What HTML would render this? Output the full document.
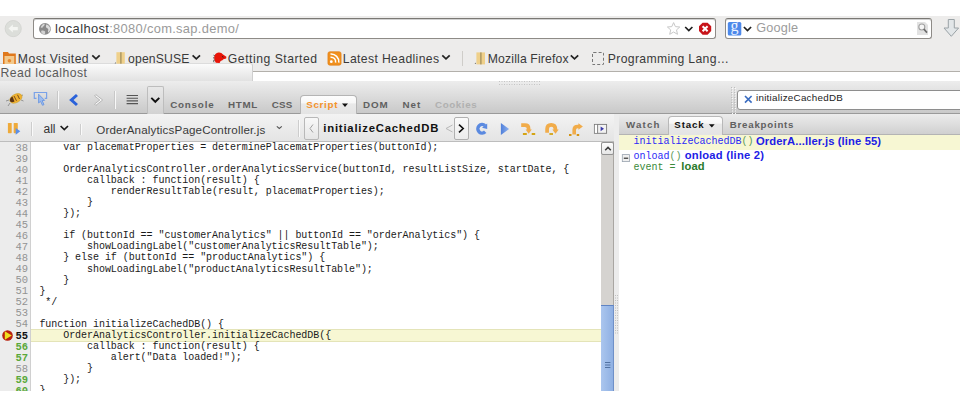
<!DOCTYPE html>
<html><head><meta charset="utf-8">
<style>
html,body{margin:0;padding:0}
body{width:966px;height:408px;position:relative;overflow:hidden;background:#fff;font-family:"Liberation Sans",sans-serif}
.a{position:absolute;box-sizing:border-box}
.t{position:absolute;white-space:pre}
svg{position:absolute;overflow:visible}
</style></head><body>
<div style="position:absolute;left:0;top:0;width:960px;height:391px;overflow:hidden">
<!-- browser chrome -->
<div class="a" style="left:0;top:16px;width:960px;height:56px;background:#edeceb;border-bottom:1px solid #b3b0ab"></div>
<!-- url bar -->
<div class="a" style="left:33px;top:18px;width:683px;height:21px;background:#fff;border:1px solid #8e8b87;border-top-color:#7a7874;border-radius:3px;box-shadow:inset 0 1px 0 rgba(0,0,0,.18)"></div>
<!-- search bar -->
<div class="a" style="left:725px;top:18px;width:207px;height:21px;background:#fff;border:1px solid #8e8b87;border-top-color:#7a7874;border-radius:3px;box-shadow:inset 0 1px 0 rgba(0,0,0,.18)"></div>
<!-- status panel -->
<div class="a" style="left:0;top:63px;width:253px;height:18px;background:linear-gradient(#fbfbfb,#e2e2e2);border-right:1px solid #cfcfcf;border-top:1px solid #dcdcdc;border-top-right-radius:3px"></div>
<!-- firebug toolbar -->
<div class="a" style="left:0;top:81px;width:960px;height:33px;background:linear-gradient(#ededed,#c9c9c9);border-bottom:1px solid #9a9a9a"></div>
<!-- script toolbar -->
<div class="a" style="left:0;top:114px;width:614px;height:28px;background:linear-gradient(#f3f3f3,#e4e4e4);border-bottom:1px solid #bdbdbd"></div>
<!-- splitter -->
<div class="a" style="left:614px;top:114px;width:5px;height:277px;background:#ececec"></div>
<!-- side tabs -->
<div class="a" style="left:619px;top:114px;width:341px;height:21px;background:linear-gradient(#ececec,#d0d0d0);border-bottom:1px solid #b4b4b4"></div>
<!-- side panel -->
<div class="a" style="left:619px;top:135px;width:341px;height:256px;background:#fff"></div>
<div class="a" style="left:619px;top:135px;width:341px;height:15px;background:#f7f7d3"></div>
<!-- code area -->
<div class="a" style="left:0;top:142px;width:614px;height:249px;background:#fff"></div>
<div class="a" style="left:0;top:142px;width:31px;height:249px;background:#ececec;border-right:1px solid #d0d0d0"></div>
<div class="a" style="left:31px;top:329px;width:570px;height:12.6px;background:#f7f7d3;border-top:1px solid #e4e4b8;border-bottom:1px solid #e4e4b8"></div>
<!-- scrollbar -->
<div class="a" style="left:601px;top:142px;width:13px;height:249px;background:#d5d3d0;border-right:1px solid #a9a6a2"></div>
<div class="a" style="left:601px;top:142px;width:13px;height:13px;background:linear-gradient(#fdfdfd,#e6e6e6);border:1px solid #939393;border-radius:2px"></div>
<div class="a" style="left:601px;top:305px;width:13px;height:86px;background:linear-gradient(90deg,#abc6ee,#8fb0e3);border-top:1px solid #5f84c4;border-right:1px solid #6f90c8"></div>
<!-- back button -->
<svg style="left:0;top:16px" width="30" height="26" viewBox="0 16 30 26">
 <circle cx="13.2" cy="28.6" r="8.1" fill="#dcdeda" stroke="#d0d2ce" stroke-width="0.8"/>
 <path d="M8.5 28.6 L12.8 24.6 L12.8 27 L17.8 27 L17.8 30.2 L12.8 30.2 L12.8 32.6 Z" fill="#f4f5f2"/>
</svg>
<!-- globe -->
<svg style="left:38px;top:22px" width="14" height="14" viewBox="38 22 14 14">
 <circle cx="44.9" cy="28.9" r="5.9" fill="#8a8a8a"/>
 <path d="M40.6 27.2 Q41.8 24.4 44.5 23.6 Q45.2 24.6 44 26 Q42.6 26.6 42.2 28 Z" fill="#d6d6d6"/>
 <path d="M46.6 24.3 Q49.6 25.6 50.5 28.6 Q50 31.5 48.2 32.8 Q47.6 31 48.4 29.4 Q47.2 27.8 46 27.6 Q45.6 25.6 46.6 24.3 Z" fill="#dcdcdc"/>
 <path d="M41.6 30.6 Q43.8 30.2 45.2 31.4 Q45.4 33.6 44.4 34.7 Q42.2 34.2 41 32 Z" fill="#d2d2d2"/>
</svg>
<!-- star -->
<svg style="left:665px;top:21px" width="17" height="16" viewBox="665 21 17 16">
 <path d="M673.6 22.6 L675.4 26.6 L679.8 27 L676.5 29.9 L677.5 34.3 L673.6 32 L669.7 34.3 L670.7 29.9 L667.4 27 L671.8 26.6 Z" fill="#fff" stroke="#c8c8c8" stroke-width="1"/>
</svg>
<!-- chevrons (url, google) -->
<svg style="left:683px;top:25px" width="12" height="8" viewBox="683 25 12 8">
 <path d="M685.2 27 L688.8 30.5 L692.4 27" fill="none" stroke="#1e1e1e" stroke-width="1.7"/>
</svg>
<svg style="left:742px;top:25px" width="12" height="8" viewBox="742 25 12 8">
 <path d="M743.9 27 L747.5 30.5 L751.1 27" fill="none" stroke="#1e1e1e" stroke-width="1.7"/>
</svg>
<!-- red stop -->
<svg style="left:698px;top:21px" width="15" height="15" viewBox="698 21 15 15">
 <path d="M702.6 22.7 L707.6 22.7 L711.2 26.3 L711.2 31.1 L707.6 34.7 L702.6 34.7 L699 31.1 L699 26.3 Z" fill="#c8141a"/>
 <path d="M702.6 26.2 L707.6 31.2 M707.6 26.2 L702.6 31.2" stroke="#fff" stroke-width="2"/>
</svg>
<!-- google g -->
<svg style="left:727px;top:21px" width="16" height="16" viewBox="727 21 16 16">
 <rect x="727.8" y="21.9" width="13.5" height="13.5" rx="1.5" fill="#4d89ea"/>
 <text x="734.4" y="30.8" font-family="Liberation Serif" font-size="16" fill="#eef4ff" text-anchor="middle">g</text>
</svg>
<!-- magnifier -->
<svg style="left:915px;top:20px" width="16" height="17" viewBox="915 20 16 17">
 <path d="M917 22 L925 22 L928 25 L928 35 L917 35 Z" fill="#e2e2e2"/>
 <circle cx="921.8" cy="27" r="3" fill="#f6f6f6" stroke="#a0a0a0" stroke-width="1.1"/>
 <path d="M923.8 29 L927 32.6" stroke="#6a6a6a" stroke-width="1.7"/>
</svg>
<!-- download arrow -->
<svg style="left:942px;top:18px" width="18" height="20" viewBox="942 18 18 20">
 <path d="M948.3 19.5 L954.3 19.5 L954.3 28 L958.6 28 L951.3 36.3 L944 28 L948.3 28 Z" fill="#e2e6e8" stroke="#9aa2a6" stroke-width="1"/>
</svg>
<!-- bookmark icons -->
<svg style="left:2px;top:51px" width="16" height="14" viewBox="2 51 16 14">
 <path d="M3 52 L8 52 L9 53.5 L15.8 53.5 L15.8 64 L3 64 Z" fill="#e0781c"/>
 <path d="M4.5 56 L14.3 56 L14.3 64 L4.5 64 Z" fill="#f3c98c"/>
 <circle cx="9.4" cy="60.8" r="1.8" fill="#e88a30"/>
</svg>
<svg style="left:112px;top:51px" width="14" height="14" viewBox="112 51 14 14">
 <path d="M114.5 63.5 L116 62 L116 63.5 Z" fill="#777"/>
 <rect x="116.4" y="52.2" width="8.4" height="11.5" fill="#efd08a"/>
 <rect x="120.3" y="52.2" width="1.2" height="11.5" fill="#9c8a5a"/>
</svg>
<svg style="left:212px;top:51px" width="16" height="13" viewBox="212 51 16 13">
 <path d="M214.2 57 Q214.6 53.4 218.6 52.6 Q221.6 52.4 223 54.6 L226.4 56.8 L226.2 58.6 L223.4 59.2 L222.4 60.2 L220.6 61 L219.6 63 L215.8 62.8 Q213.8 60.6 214.2 57 Z" fill="#e81408"/>
 <path d="M213.6 55.2 L214.6 55.6 M213.2 57.8 L214.4 58 M213.4 60.4 L214.6 60.2 M213.3 61.6 L214.3 61.9 M222 56.5 L223.5 57.2" stroke="#222" stroke-width="0.9"/>
</svg>
<svg style="left:327px;top:51px" width="15" height="15" viewBox="327 51 15 15">
 <rect x="327.9" y="51.7" width="13.2" height="13.5" rx="2" fill="#f0901e" stroke="#e07a10" stroke-width="0.6"/>
 <circle cx="331.3" cy="61.7" r="1.4" fill="#fff"/>
 <path d="M330.5 57.2 A4.6 4.6 0 0 1 335.6 62.6 M330.5 54 A7.8 7.8 0 0 1 338.8 62.6" fill="none" stroke="#fff" stroke-width="1.5"/>
</svg>
<div class="a" style="left:462px;top:51px;width:1px;height:15px;background:#cfcdc9"></div>
<svg style="left:472px;top:51px" width="14" height="14" viewBox="472 51 14 14">
 <path d="M474.5 64 L476 62.5 L476 64 Z" fill="#777"/>
 <rect x="476.4" y="52.4" width="8.6" height="12" fill="#efd08a"/>
 <rect x="480.3" y="52.4" width="1.2" height="12" fill="#9c8a5a"/>
</svg>
<div class="a" style="left:592px;top:52px;width:12px;height:12.5px;border:1px dashed #777;border-radius:1.5px"></div>
<!-- bookmark chevrons -->
<svg style="left:90px;top:54px" width="12" height="8" viewBox="90 54 12 8">
 <path d="M92.3 55.3 L96 58.9 L99.7 55.3" fill="none" stroke="#222" stroke-width="1.7"/>
</svg>
<svg style="left:190px;top:54px" width="12" height="8" viewBox="190 54 12 8">
 <path d="M192.6 55.3 L196.3 58.9 L200 55.3" fill="none" stroke="#222" stroke-width="1.7"/>
</svg>
<svg style="left:440px;top:54px" width="12" height="8" viewBox="440 54 12 8">
 <path d="M442.3 55.3 L446 58.9 L449.7 55.3" fill="none" stroke="#222" stroke-width="1.7"/>
</svg>
<svg style="left:569px;top:54px" width="12" height="8" viewBox="569 54 12 8">
 <path d="M570.8 55.3 L574.5 58.9 L578.2 55.3" fill="none" stroke="#222" stroke-width="1.7"/>
</svg>
<!-- firebug bug -->
<svg style="left:4px;top:90px" width="22" height="18" viewBox="4 90 22 18">
 <path d="M9 100 L6 101 M10 103 L8 106 M20 96 L23 95 M21 100 L23.5 101" stroke="#777" stroke-width="0.7"/>
 <ellipse cx="15.9" cy="98.4" rx="6.6" ry="4.2" transform="rotate(-28 15.9 98.4)" fill="#f0b030" stroke="#c8a028" stroke-width="0.5"/>
 <path d="M10.2 101.5 Q9 98.5 12.5 96.5 L14.5 101.5 Q12 103 10.2 101.5 Z" fill="#5a3418"/>
 <path d="M14 96 L16.5 100.8 M17.5 94.8 L19.5 99" stroke="#6a4418" stroke-width="0.9"/>
</svg>
<!-- inspect -->
<svg style="left:32px;top:90px" width="18" height="18" viewBox="32 90 18 18">
 <path d="M36.5 98.4 L34.3 98.4 L34.3 92.5 L46.6 92.5 L46.6 98.4 L44.8 98.4" fill="none" stroke="#7aa2e8" stroke-width="1.2"/>
 <path d="M38.6 94.2 L38.6 103 L40.5 101.3 L42.5 105.3 L44 104.6 L42.1 100.6 L44.6 100.4 Z" fill="#9dbdf0" stroke="#5f8fe0" stroke-width="0.8"/>
</svg>
<div class="a" style="left:57px;top:91px;width:2px;height:18px;border-left:1px solid #c8c8c8;border-right:1px solid #f8f8f8"></div>
<!-- back / fwd -->
<svg style="left:68px;top:92px" width="40" height="16" viewBox="68 92 40 16">
 <path d="M77 95 L71.4 100 L77 105" fill="none" stroke="#2a62da" stroke-width="3" stroke-linejoin="miter"/>
 <path d="M95.8 94.6 L102.6 100 L95.8 105.4 L94.6 104 L99.8 100 L94.6 96 Z" fill="#fafafa" stroke="#a8a8a8" stroke-width="0.8"/>
</svg>
<div class="a" style="left:114px;top:91px;width:2px;height:18px;border-left:1px solid #c8c8c8;border-right:1px solid #f8f8f8"></div>
<!-- menu lines -->
<svg style="left:125px;top:94px" width="15" height="12" viewBox="125 94 15 12">
 <path d="M126.6 95.5 H138 M126.6 98.2 H138 M126.6 100.9 H138 M126.6 103.6 H138" stroke="#555" stroke-width="1.1"/>
</svg>
<!-- dropdown button -->
<div class="a" style="left:147px;top:86px;width:17px;height:28px;background:linear-gradient(#e8e8e8,#d2d2d2);border:1px solid #bdbdbd;border-bottom:none;border-radius:2px 2px 0 0"></div>
<svg style="left:149px;top:96px" width="13" height="9" viewBox="149 96 13 9">
 <path d="M151.3 97.9 L155.3 101.8 L159.3 97.9" fill="none" stroke="#111" stroke-width="1.9"/>
</svg>
<!-- script tab -->
<div class="a" style="left:300px;top:95px;width:57px;height:19px;background:linear-gradient(#fdfdfd,#f7f7f7 38%,#e9e9e9 44%,#e4e4e4);border:1px solid #b4b4b4;border-bottom:none;border-radius:4px 4px 0 0"></div>
<svg style="left:341px;top:102px" width="8" height="5" viewBox="341 102 8 5">
 <path d="M342 103.5 L348 103.5 L345 106.9 Z" fill="#111"/>
</svg>
<!-- search grip -->
<svg style="left:728px;top:84px" width="10" height="32" viewBox="728 84 10 32"><rect x="731" y="87.0" width="1" height="1" fill="#bcbcbc"/><rect x="732" y="88.0" width="1" height="1" fill="#fafafa"/><rect x="731" y="89.5" width="1" height="1" fill="#bcbcbc"/><rect x="732" y="90.5" width="1" height="1" fill="#fafafa"/><rect x="731" y="92.0" width="1" height="1" fill="#bcbcbc"/><rect x="732" y="93.0" width="1" height="1" fill="#fafafa"/><rect x="731" y="94.5" width="1" height="1" fill="#bcbcbc"/><rect x="732" y="95.5" width="1" height="1" fill="#fafafa"/><rect x="731" y="97.0" width="1" height="1" fill="#bcbcbc"/><rect x="732" y="98.0" width="1" height="1" fill="#fafafa"/><rect x="731" y="99.5" width="1" height="1" fill="#bcbcbc"/><rect x="732" y="100.5" width="1" height="1" fill="#fafafa"/><rect x="731" y="102.0" width="1" height="1" fill="#bcbcbc"/><rect x="732" y="103.0" width="1" height="1" fill="#fafafa"/><rect x="731" y="104.5" width="1" height="1" fill="#bcbcbc"/><rect x="732" y="105.5" width="1" height="1" fill="#fafafa"/><rect x="731" y="107.0" width="1" height="1" fill="#bcbcbc"/><rect x="732" y="108.0" width="1" height="1" fill="#fafafa"/><rect x="731" y="109.5" width="1" height="1" fill="#bcbcbc"/><rect x="732" y="110.5" width="1" height="1" fill="#fafafa"/><rect x="731" y="112.0" width="1" height="1" fill="#bcbcbc"/><rect x="732" y="113.0" width="1" height="1" fill="#fafafa"/><rect x="734" y="87.0" width="1" height="1" fill="#bcbcbc"/><rect x="735" y="88.0" width="1" height="1" fill="#fafafa"/><rect x="734" y="89.5" width="1" height="1" fill="#bcbcbc"/><rect x="735" y="90.5" width="1" height="1" fill="#fafafa"/><rect x="734" y="92.0" width="1" height="1" fill="#bcbcbc"/><rect x="735" y="93.0" width="1" height="1" fill="#fafafa"/><rect x="734" y="94.5" width="1" height="1" fill="#bcbcbc"/><rect x="735" y="95.5" width="1" height="1" fill="#fafafa"/><rect x="734" y="97.0" width="1" height="1" fill="#bcbcbc"/><rect x="735" y="98.0" width="1" height="1" fill="#fafafa"/><rect x="734" y="99.5" width="1" height="1" fill="#bcbcbc"/><rect x="735" y="100.5" width="1" height="1" fill="#fafafa"/><rect x="734" y="102.0" width="1" height="1" fill="#bcbcbc"/><rect x="735" y="103.0" width="1" height="1" fill="#fafafa"/><rect x="734" y="104.5" width="1" height="1" fill="#bcbcbc"/><rect x="735" y="105.5" width="1" height="1" fill="#fafafa"/><rect x="734" y="107.0" width="1" height="1" fill="#bcbcbc"/><rect x="735" y="108.0" width="1" height="1" fill="#fafafa"/><rect x="734" y="109.5" width="1" height="1" fill="#bcbcbc"/><rect x="735" y="110.5" width="1" height="1" fill="#fafafa"/><rect x="734" y="112.0" width="1" height="1" fill="#bcbcbc"/><rect x="735" y="113.0" width="1" height="1" fill="#fafafa"/></svg>
<!-- search box -->
<div class="a" style="left:737px;top:90px;width:230px;height:20px;background:#fff;border:1px solid #8e8e8e;border-radius:3px"></div>
<svg style="left:743px;top:94px" width="11" height="10" viewBox="743 94 11 10">
 <path d="M745 96 L751.6 102.6 M751.6 96 L745 102.6" stroke="#3a6cc0" stroke-width="1.6"/>
</svg>
<!-- top grip -->
<svg style="left:496px;top:80px" width="46" height="7" viewBox="496 80 46 7"><rect x="499.0" y="81" width="1" height="1" fill="#c4c4c4"/><rect x="501.5" y="81" width="1" height="1" fill="#c4c4c4"/><rect x="504.0" y="81" width="1" height="1" fill="#c4c4c4"/><rect x="506.5" y="81" width="1" height="1" fill="#c4c4c4"/><rect x="509.0" y="81" width="1" height="1" fill="#c4c4c4"/><rect x="511.5" y="81" width="1" height="1" fill="#c4c4c4"/><rect x="514.0" y="81" width="1" height="1" fill="#c4c4c4"/><rect x="516.5" y="81" width="1" height="1" fill="#c4c4c4"/><rect x="519.0" y="81" width="1" height="1" fill="#c4c4c4"/><rect x="521.5" y="81" width="1" height="1" fill="#c4c4c4"/><rect x="524.0" y="81" width="1" height="1" fill="#c4c4c4"/><rect x="526.5" y="81" width="1" height="1" fill="#c4c4c4"/><rect x="529.0" y="81" width="1" height="1" fill="#c4c4c4"/><rect x="531.5" y="81" width="1" height="1" fill="#c4c4c4"/><rect x="534.0" y="81" width="1" height="1" fill="#c4c4c4"/><rect x="536.5" y="81" width="1" height="1" fill="#c4c4c4"/><rect x="539.0" y="81" width="1" height="1" fill="#c4c4c4"/><rect x="499.0" y="84" width="1" height="1" fill="#c4c4c4"/><rect x="501.5" y="84" width="1" height="1" fill="#c4c4c4"/><rect x="504.0" y="84" width="1" height="1" fill="#c4c4c4"/><rect x="506.5" y="84" width="1" height="1" fill="#c4c4c4"/><rect x="509.0" y="84" width="1" height="1" fill="#c4c4c4"/><rect x="511.5" y="84" width="1" height="1" fill="#c4c4c4"/><rect x="514.0" y="84" width="1" height="1" fill="#c4c4c4"/><rect x="516.5" y="84" width="1" height="1" fill="#c4c4c4"/><rect x="519.0" y="84" width="1" height="1" fill="#c4c4c4"/><rect x="521.5" y="84" width="1" height="1" fill="#c4c4c4"/><rect x="524.0" y="84" width="1" height="1" fill="#c4c4c4"/><rect x="526.5" y="84" width="1" height="1" fill="#c4c4c4"/><rect x="529.0" y="84" width="1" height="1" fill="#c4c4c4"/><rect x="531.5" y="84" width="1" height="1" fill="#c4c4c4"/><rect x="534.0" y="84" width="1" height="1" fill="#c4c4c4"/><rect x="536.5" y="84" width="1" height="1" fill="#c4c4c4"/><rect x="539.0" y="84" width="1" height="1" fill="#c4c4c4"/></svg>
<!-- pause -->
<svg style="left:6px;top:121px" width="18" height="16" viewBox="6 121 18 16">
 <rect x="7.9" y="123" width="3.8" height="10.2" rx="0.6" fill="#eeaa3a"/>
 <rect x="13.7" y="123" width="4.1" height="10.2" rx="0.6" fill="#eeaa3a"/>
 <path d="M15.7 128 L20.3 131.3 L15.7 134.7 Z" fill="#5b8fe8"/>
</svg>
<div class="a" style="left:31px;top:122px;width:2px;height:14px;border-left:1px solid #cdcdcd;border-right:1px solid #fafafa"></div>
<svg style="left:59px;top:124px" width="11" height="7" viewBox="59 124 11 7">
 <path d="M60.6 126 L64.3 129.5 L68 126" fill="none" stroke="#1a1a1a" stroke-width="1.7"/>
</svg>
<div class="a" style="left:80px;top:123.5px;width:2px;height:11px;border-left:1px solid #cdcdcd;border-right:1px solid #fafafa"></div>
<svg style="left:275px;top:125px" width="8" height="5" viewBox="275 125 8 5">
 <path d="M276.8 126.3 L279.3 128.5 L281.8 126.3" fill="none" stroke="#555" stroke-width="1.1"/>
</svg>
<div class="a" style="left:298px;top:120px;width:2px;height:17px;border-left:1px solid #cdcdcd;border-right:1px solid #fafafa"></div>
<!-- < > boxes -->
<div class="a" style="left:304px;top:117px;width:15px;height:23px;background:linear-gradient(#f8f8f8,#e6e6e6);border:1px solid #b8b8b8;border-radius:2px"></div>
<svg style="left:308px;top:123px" width="8" height="11" viewBox="308 123 8 11">
 <path d="M313 124.5 L310 128.5 L313 132.5" fill="none" stroke="#a0a0a0" stroke-width="1"/>
</svg>
<svg style="left:444px;top:123px" width="10" height="11" viewBox="444 123 10 11">
 <path d="M452.5 125 L446 128.5 L452.5 132" fill="none" stroke="#b8b8b8" stroke-width="1"/>
</svg>
<div class="a" style="left:454px;top:117px;width:15px;height:23px;background:linear-gradient(#fafafa,#ececec);border:1px solid #b0b0b0;border-radius:2px"></div>
<svg style="left:457px;top:123px" width="8" height="11" viewBox="457 123 8 11">
 <path d="M459 124.6 L463.2 128.5 L459 132.4" fill="none" stroke="#111" stroke-width="1.6"/>
</svg>
<!-- rerun -->
<svg style="left:472px;top:120px" width="18" height="17" viewBox="472 120 18 17">
 <path d="M485 125.6 A4.3 4.3 0 1 0 485.2 131.8" fill="none" stroke="#5b8ae0" stroke-width="3.4"/>
 <path d="M482 127.8 L487.2 123.6 L487.2 129 Z" fill="#5b8ae0"/>
</svg>
<!-- play -->
<svg style="left:499px;top:121px" width="12" height="16" viewBox="499 121 12 16">
 <defs><linearGradient id="pg" x1="0" x2="1"><stop offset="0" stop-color="#4f7fda"/><stop offset="1" stop-color="#8fb2ee"/></linearGradient></defs>
 <path d="M500.9 122.9 L509.1 128.9 L500.9 134.9 Z" fill="url(#pg)"/>
</svg>
<!-- step over -->
<svg style="left:519px;top:121px" width="18" height="16" viewBox="519 121 18 16">
 <path d="M521.2 125.1 L525 125.1 Q528.6 125.1 528.6 128.7 L528.6 130" fill="none" stroke="#f1ac4a" stroke-width="3.7"/>
 <path d="M525.6 129.4 L531.8 129.4 L528.7 133.7 Z" fill="#f1ac4a"/>
 <path d="M522.9 134 H526.8 M531.7 134 H535.2" stroke="#d4a414" stroke-width="1.8"/>
</svg>
<!-- step into -->
<svg style="left:543px;top:121px" width="18" height="16" viewBox="543 121 18 16">
 <path d="M547.1 132.7 L547.1 129 Q547.1 124.8 551.2 124.8 Q555.4 124.8 555.4 129 L555.4 130" fill="none" stroke="#f1ac4a" stroke-width="3.7"/>
 <path d="M552.3 129.4 L558.7 129.4 L555.5 133.7 Z" fill="#f1ac4a"/>
 <path d="M549.4 134 H553" stroke="#d4a414" stroke-width="1.8"/>
</svg>
<!-- step out -->
<svg style="left:567px;top:121px" width="18" height="16" viewBox="567 121 18 16">
 <path d="M574.2 134.5 L574.2 130 Q574.2 126.5 577.7 126.5 L579 126.5" fill="none" stroke="#f1ac4a" stroke-width="3.6"/>
 <path d="M578.4 123.2 L582.9 126.5 L578.4 129.8 Z" fill="#f1ac4a"/>
 <path d="M569 134.9 H571.5 M576.7 134.9 H579.2" stroke="#d49414" stroke-width="2"/>
</svg>
<!-- panel toggle -->
<svg style="left:593px;top:123px" width="16" height="12" viewBox="593 123 16 12">
 <rect x="594.4" y="124.4" width="12.2" height="8.9" fill="#f2f2f2" stroke="#7a7a7a" stroke-width="0.9"/>
 <rect x="594.9" y="124.9" width="2.2" height="7.9" fill="#fff"/>
 <path d="M597.6 124.4 V133.3" stroke="#7a7a7a" stroke-width="0.9"/>
 <path d="M600.6 126.5 L604 128.85 L600.6 131.2 Z" fill="#3a3aa8"/>
</svg>
<!-- side tabs -->
<div class="a" style="left:668px;top:116px;width:55px;height:19px;background:linear-gradient(#fdfdfd,#f7f7f7 34%,#e9e9e9 40%,#e4e4e4);border:1px solid #b8b8b8;border-bottom:none;border-radius:4px 4px 0 0"></div>
<svg style="left:707px;top:123px" width="9" height="5" viewBox="707 123 9 5">
 <path d="M708.9 124.2 L714.7 124.2 L711.8 127.5 Z" fill="#111"/>
</svg>
<!-- minus box -->
<svg style="left:621px;top:153px" width="10" height="10" viewBox="621 153 10 10">
 <rect x="622.3" y="154.6" width="7.2" height="7" fill="#f0f0f0" stroke="#9aa4b0" stroke-width="0.8"/>
 <path d="M623.8 158.2 H628.2" stroke="#222" stroke-width="1.1"/>
</svg>
<!-- scrollbar up arrow -->
<svg style="left:603px;top:145px" width="10" height="8" viewBox="603 145 10 8">
 <path d="M605.2 150.2 L608 147.4 L610.8 150.2" fill="none" stroke="#3a3a3a" stroke-width="1.5"/>
</svg>
<!-- thumb grip -->
<svg style="left:604px;top:360px" width="8" height="10" viewBox="604 360 8 10">
 <path d="M605 362.5 H610.4 M605 365 H610.4 M605 367.5 H610.4" stroke="#4a6a9a" stroke-width="0.9"/>
</svg>
<!-- splitter grip -->
<svg style="left:613px;top:293px" width="8" height="46" viewBox="613 293 8 46"><rect x="615" y="295.0" width="1" height="1" fill="#c0c0c0"/><rect x="615" y="297.5" width="1" height="1" fill="#c0c0c0"/><rect x="615" y="300.0" width="1" height="1" fill="#c0c0c0"/><rect x="615" y="302.5" width="1" height="1" fill="#c0c0c0"/><rect x="615" y="305.0" width="1" height="1" fill="#c0c0c0"/><rect x="615" y="307.5" width="1" height="1" fill="#c0c0c0"/><rect x="615" y="310.0" width="1" height="1" fill="#c0c0c0"/><rect x="615" y="312.5" width="1" height="1" fill="#c0c0c0"/><rect x="615" y="315.0" width="1" height="1" fill="#c0c0c0"/><rect x="615" y="317.5" width="1" height="1" fill="#c0c0c0"/><rect x="615" y="320.0" width="1" height="1" fill="#c0c0c0"/><rect x="615" y="322.5" width="1" height="1" fill="#c0c0c0"/><rect x="615" y="325.0" width="1" height="1" fill="#c0c0c0"/><rect x="615" y="327.5" width="1" height="1" fill="#c0c0c0"/><rect x="615" y="330.0" width="1" height="1" fill="#c0c0c0"/><rect x="615" y="332.5" width="1" height="1" fill="#c0c0c0"/><rect x="617" y="295.0" width="1" height="1" fill="#c0c0c0"/><rect x="617" y="297.5" width="1" height="1" fill="#c0c0c0"/><rect x="617" y="300.0" width="1" height="1" fill="#c0c0c0"/><rect x="617" y="302.5" width="1" height="1" fill="#c0c0c0"/><rect x="617" y="305.0" width="1" height="1" fill="#c0c0c0"/><rect x="617" y="307.5" width="1" height="1" fill="#c0c0c0"/><rect x="617" y="310.0" width="1" height="1" fill="#c0c0c0"/><rect x="617" y="312.5" width="1" height="1" fill="#c0c0c0"/><rect x="617" y="315.0" width="1" height="1" fill="#c0c0c0"/><rect x="617" y="317.5" width="1" height="1" fill="#c0c0c0"/><rect x="617" y="320.0" width="1" height="1" fill="#c0c0c0"/><rect x="617" y="322.5" width="1" height="1" fill="#c0c0c0"/><rect x="617" y="325.0" width="1" height="1" fill="#c0c0c0"/><rect x="617" y="327.5" width="1" height="1" fill="#c0c0c0"/><rect x="617" y="330.0" width="1" height="1" fill="#c0c0c0"/><rect x="617" y="332.5" width="1" height="1" fill="#c0c0c0"/></svg>
<!-- breakpoint -->
<svg style="left:1px;top:329px" width="14" height="13" viewBox="1 329 14 13">
 <circle cx="7.5" cy="335.5" r="5.3" fill="#b8200e"/>
 <path d="M4.8 331.2 L11.8 335.5 L4.8 339.8 Z" fill="#f0e020"/>
</svg>

<span class="t" style="left:55.03px;top:20.77px;font-family:'Liberation Sans',sans-serif;font-size:12.9px;line-height:16.12px;font-weight:400;color:#383838;letter-spacing:0.371px">localhost</span>
<span class="t" style="left:109.23px;top:20.77px;font-family:'Liberation Sans',sans-serif;font-size:12.9px;line-height:16.12px;font-weight:400;color:#9a9a9a;letter-spacing:0.309px">:8080/com.sap.demo/</span>
<span class="t" style="left:756.24px;top:21.06px;font-family:'Liberation Sans',sans-serif;font-size:12.7px;line-height:15.88px;font-weight:400;color:#9c9c9c;letter-spacing:0.182px">Google</span>
<span class="t" style="left:17.87px;top:52.15px;font-family:'Liberation Sans',sans-serif;font-size:12.2px;line-height:15.25px;font-weight:400;color:#3a3a3a;letter-spacing:0.418px">Most Visited</span>
<span class="t" style="left:128.07px;top:52.15px;font-family:'Liberation Sans',sans-serif;font-size:12.2px;line-height:15.25px;font-weight:400;color:#3a3a3a;letter-spacing:0.133px">openSUSE</span>
<span class="t" style="left:227.87px;top:52.15px;font-family:'Liberation Sans',sans-serif;font-size:12.2px;line-height:15.25px;font-weight:400;color:#3a3a3a;letter-spacing:0.519px">Getting Started</span>
<span class="t" style="left:342.77px;top:52.15px;font-family:'Liberation Sans',sans-serif;font-size:12.2px;line-height:15.25px;font-weight:400;color:#3a3a3a;letter-spacing:0.367px">Latest Headlines</span>
<span class="t" style="left:487.77px;top:52.15px;font-family:'Liberation Sans',sans-serif;font-size:12.2px;line-height:15.25px;font-weight:400;color:#3a3a3a;letter-spacing:0.161px">Mozilla Firefox</span>
<span class="t" style="left:607.87px;top:52.15px;font-family:'Liberation Sans',sans-serif;font-size:12.2px;line-height:15.25px;font-weight:400;color:#3a3a3a;letter-spacing:0.331px">Programming Lang…</span>
<span class="t" style="left:0.57px;top:65.65px;font-family:'Liberation Sans',sans-serif;font-size:12.2px;line-height:15.25px;font-weight:400;color:#5a5a5a;letter-spacing:0.432px">Read localhost</span>
<span class="t" style="left:170.21px;top:98.78px;font-family:'Liberation Sans',sans-serif;font-size:9.8px;line-height:12.25px;font-weight:700;color:#606060;letter-spacing:0.790px">Console</span>
<span class="t" style="left:228.11px;top:98.78px;font-family:'Liberation Sans',sans-serif;font-size:9.8px;line-height:12.25px;font-weight:700;color:#606060;letter-spacing:0.641px">HTML</span>
<span class="t" style="left:271.71px;top:98.78px;font-family:'Liberation Sans',sans-serif;font-size:9.8px;line-height:12.25px;font-weight:700;color:#606060;letter-spacing:0.209px">CSS</span>
<span class="t" style="left:306.21px;top:98.78px;font-family:'Liberation Sans',sans-serif;font-size:9.8px;line-height:12.25px;font-weight:700;color:#f4932b;letter-spacing:0.703px">Script</span>
<span class="t" style="left:362.91px;top:98.78px;font-family:'Liberation Sans',sans-serif;font-size:9.8px;line-height:12.25px;font-weight:700;color:#606060;letter-spacing:0.975px">DOM</span>
<span class="t" style="left:402.41px;top:98.78px;font-family:'Liberation Sans',sans-serif;font-size:9.8px;line-height:12.25px;font-weight:700;color:#606060;letter-spacing:0.996px">Net</span>
<span class="t" style="left:435.11px;top:98.78px;font-family:'Liberation Sans',sans-serif;font-size:9.8px;line-height:12.25px;font-weight:700;color:#b0b0b0;letter-spacing:0.566px">Cookies</span>
<span class="t" style="left:756.01px;top:92.18px;font-family:'Liberation Sans',sans-serif;font-size:9.8px;line-height:12.25px;font-weight:400;color:#222;letter-spacing:0.269px">initializeCachedDB</span>
<span class="t" style="left:43.58px;top:121.84px;font-family:'Liberation Sans',sans-serif;font-size:12px;line-height:15.0px;font-weight:400;color:#333;letter-spacing:-0.119px">all</span>
<span class="t" style="left:96.30px;top:122.83px;font-family:'Liberation Sans',sans-serif;font-size:11.6px;line-height:14.5px;font-weight:400;color:#3a3a3a;letter-spacing:0.155px">OrderAnalyticsPageController.js</span>
<span class="t" style="left:323.32px;top:121.32px;font-family:'Liberation Sans',sans-serif;font-size:11.3px;line-height:14.12px;font-weight:700;color:#111;letter-spacing:0.789px">initializeCachedDB</span>
<span class="t" style="left:626.12px;top:118.98px;font-family:'Liberation Sans',sans-serif;font-size:9.7px;line-height:12.12px;font-weight:700;color:#606060;letter-spacing:1.155px">Watch</span>
<span class="t" style="left:674.32px;top:118.98px;font-family:'Liberation Sans',sans-serif;font-size:9.7px;line-height:12.12px;font-weight:700;color:#111;letter-spacing:0.883px">Stack</span>
<span class="t" style="left:729.82px;top:118.98px;font-family:'Liberation Sans',sans-serif;font-size:9.7px;line-height:12.12px;font-weight:700;color:#606060;letter-spacing:0.771px">Breakpoints</span>
<span class="t" style="left:633.40px;top:136.19px;font-family:'Liberation Mono',monospace;font-size:10px;line-height:12.5px;font-weight:400;color:#2a2af6">initializeCachedDB</span>
<span class="t" style="left:741.40px;top:136.19px;font-family:'Liberation Mono',monospace;font-size:10px;line-height:12.5px;font-weight:400;color:#5a9a5a">()</span>
<span class="t" style="left:755.93px;top:134.22px;font-family:'Liberation Sans',sans-serif;font-size:11.2px;line-height:14.0px;font-weight:700;color:#2020e6;letter-spacing:0.132px">OrderA...ller.js (line 55)</span>
<span class="t" style="left:633.40px;top:150.69px;font-family:'Liberation Mono',monospace;font-size:10px;line-height:12.5px;font-weight:400;color:#2a2af6">onload</span>
<span class="t" style="left:669.40px;top:150.69px;font-family:'Liberation Mono',monospace;font-size:10px;line-height:12.5px;font-weight:400;color:#5a9a5a">()</span>
<span class="t" style="left:684.73px;top:148.02px;font-family:'Liberation Sans',sans-serif;font-size:11.2px;line-height:14.0px;font-weight:700;color:#2020e6;letter-spacing:0.245px">onload (line 2)</span>
<span class="t" style="left:633.40px;top:162.29px;font-family:'Liberation Mono',monospace;font-size:10px;line-height:12.5px;font-weight:400;color:#3a8a3a">event = </span>
<span class="t" style="left:681.33px;top:159.32px;font-family:'Liberation Sans',sans-serif;font-size:11.2px;line-height:14.0px;font-weight:700;color:#2a7a2a;letter-spacing:0.099px">load</span>
<span class="t" style="left:39.40px;top:142.09px;font-family:'Liberation Mono',monospace;font-size:10px;line-height:12.5px;font-weight:400;color:#1a1a1a;letter-spacing:-0.047px">    var placematProperties = determinePlacematProperties(buttonId);</span>
<span class="t" style="left:15.39px;top:141.85px;font-family:'Liberation Mono',monospace;font-size:10.5px;line-height:13.12px;font-weight:400;color:#939393">38</span>
<span class="t" style="left:15.39px;top:152.89px;font-family:'Liberation Mono',monospace;font-size:10.5px;line-height:13.12px;font-weight:400;color:#939393">39</span>
<span class="t" style="left:39.40px;top:164.17px;font-family:'Liberation Mono',monospace;font-size:10px;line-height:12.5px;font-weight:400;color:#1a1a1a;letter-spacing:-0.047px">    OrderAnalyticsController.orderAnalyticsService(buttonId, resultListSize, startDate, {</span>
<span class="t" style="left:15.39px;top:163.93px;font-family:'Liberation Mono',monospace;font-size:10.5px;line-height:13.12px;font-weight:400;color:#939393">40</span>
<span class="t" style="left:39.40px;top:175.21px;font-family:'Liberation Mono',monospace;font-size:10px;line-height:12.5px;font-weight:400;color:#1a1a1a;letter-spacing:-0.047px">        callback : function(result) {</span>
<span class="t" style="left:15.39px;top:174.97px;font-family:'Liberation Mono',monospace;font-size:10.5px;line-height:13.12px;font-weight:400;color:#939393">41</span>
<span class="t" style="left:39.40px;top:186.25px;font-family:'Liberation Mono',monospace;font-size:10px;line-height:12.5px;font-weight:400;color:#1a1a1a;letter-spacing:-0.047px">            renderResultTable(result, placematProperties);</span>
<span class="t" style="left:15.39px;top:186.01px;font-family:'Liberation Mono',monospace;font-size:10.5px;line-height:13.12px;font-weight:400;color:#939393">42</span>
<span class="t" style="left:39.40px;top:197.29px;font-family:'Liberation Mono',monospace;font-size:10px;line-height:12.5px;font-weight:400;color:#1a1a1a;letter-spacing:-0.047px">        }</span>
<span class="t" style="left:15.39px;top:197.05px;font-family:'Liberation Mono',monospace;font-size:10.5px;line-height:13.12px;font-weight:400;color:#939393">43</span>
<span class="t" style="left:39.40px;top:208.33px;font-family:'Liberation Mono',monospace;font-size:10px;line-height:12.5px;font-weight:400;color:#1a1a1a;letter-spacing:-0.047px">    });</span>
<span class="t" style="left:15.39px;top:208.09px;font-family:'Liberation Mono',monospace;font-size:10.5px;line-height:13.12px;font-weight:400;color:#939393">44</span>
<span class="t" style="left:15.39px;top:219.13px;font-family:'Liberation Mono',monospace;font-size:10.5px;line-height:13.12px;font-weight:400;color:#939393">45</span>
<span class="t" style="left:39.40px;top:230.41px;font-family:'Liberation Mono',monospace;font-size:10px;line-height:12.5px;font-weight:400;color:#1a1a1a;letter-spacing:-0.047px">    if (buttonId == &quot;customerAnalytics&quot; || buttonId == &quot;orderAnalytics&quot;) {</span>
<span class="t" style="left:15.39px;top:230.17px;font-family:'Liberation Mono',monospace;font-size:10.5px;line-height:13.12px;font-weight:400;color:#939393">46</span>
<span class="t" style="left:39.40px;top:241.45px;font-family:'Liberation Mono',monospace;font-size:10px;line-height:12.5px;font-weight:400;color:#1a1a1a;letter-spacing:-0.047px">        showLoadingLabel(&quot;customerAnalyticsResultTable&quot;);</span>
<span class="t" style="left:15.39px;top:241.21px;font-family:'Liberation Mono',monospace;font-size:10.5px;line-height:13.12px;font-weight:400;color:#939393">47</span>
<span class="t" style="left:39.40px;top:252.49px;font-family:'Liberation Mono',monospace;font-size:10px;line-height:12.5px;font-weight:400;color:#1a1a1a;letter-spacing:-0.047px">    } else if (buttonId == &quot;productAnalytics&quot;) {</span>
<span class="t" style="left:15.39px;top:252.25px;font-family:'Liberation Mono',monospace;font-size:10.5px;line-height:13.12px;font-weight:400;color:#939393">48</span>
<span class="t" style="left:39.40px;top:263.53px;font-family:'Liberation Mono',monospace;font-size:10px;line-height:12.5px;font-weight:400;color:#1a1a1a;letter-spacing:-0.047px">        showLoadingLabel(&quot;productAnalyticsResultTable&quot;);</span>
<span class="t" style="left:15.39px;top:263.29px;font-family:'Liberation Mono',monospace;font-size:10.5px;line-height:13.12px;font-weight:400;color:#939393">49</span>
<span class="t" style="left:39.40px;top:274.57px;font-family:'Liberation Mono',monospace;font-size:10px;line-height:12.5px;font-weight:400;color:#1a1a1a;letter-spacing:-0.047px">    }</span>
<span class="t" style="left:15.39px;top:274.33px;font-family:'Liberation Mono',monospace;font-size:10.5px;line-height:13.12px;font-weight:400;color:#939393">50</span>
<span class="t" style="left:39.40px;top:285.61px;font-family:'Liberation Mono',monospace;font-size:10px;line-height:12.5px;font-weight:400;color:#1a1a1a;letter-spacing:-0.047px">}</span>
<span class="t" style="left:15.39px;top:285.37px;font-family:'Liberation Mono',monospace;font-size:10.5px;line-height:13.12px;font-weight:400;color:#939393">51</span>
<span class="t" style="left:39.40px;top:296.65px;font-family:'Liberation Mono',monospace;font-size:10px;line-height:12.5px;font-weight:400;color:#1a1a1a;letter-spacing:-0.047px"> */</span>
<span class="t" style="left:15.39px;top:296.41px;font-family:'Liberation Mono',monospace;font-size:10.5px;line-height:13.12px;font-weight:400;color:#939393">52</span>
<span class="t" style="left:15.39px;top:307.45px;font-family:'Liberation Mono',monospace;font-size:10.5px;line-height:13.12px;font-weight:400;color:#939393">53</span>
<span class="t" style="left:39.40px;top:318.73px;font-family:'Liberation Mono',monospace;font-size:10px;line-height:12.5px;font-weight:400;color:#1a1a1a;letter-spacing:-0.047px">function initializeCachedDB() {</span>
<span class="t" style="left:15.39px;top:318.49px;font-family:'Liberation Mono',monospace;font-size:10.5px;line-height:13.12px;font-weight:400;color:#939393">54</span>
<span class="t" style="left:39.40px;top:329.77px;font-family:'Liberation Mono',monospace;font-size:10px;line-height:12.5px;font-weight:400;color:#1a1a1a;letter-spacing:-0.047px">    OrderAnalyticsController.initializeCachedDB({</span>
<span class="t" style="left:15.39px;top:329.53px;font-family:'Liberation Mono',monospace;font-size:10.5px;line-height:13.12px;font-weight:700;color:#111">55</span>
<span class="t" style="left:39.40px;top:340.81px;font-family:'Liberation Mono',monospace;font-size:10px;line-height:12.5px;font-weight:400;color:#1a1a1a;letter-spacing:-0.047px">        callback : function(result) {</span>
<span class="t" style="left:15.39px;top:340.57px;font-family:'Liberation Mono',monospace;font-size:10.5px;line-height:13.12px;font-weight:700;color:#5aa83a">56</span>
<span class="t" style="left:39.40px;top:351.85px;font-family:'Liberation Mono',monospace;font-size:10px;line-height:12.5px;font-weight:400;color:#1a1a1a;letter-spacing:-0.047px">            alert(&quot;Data loaded!&quot;);</span>
<span class="t" style="left:15.39px;top:351.61px;font-family:'Liberation Mono',monospace;font-size:10.5px;line-height:13.12px;font-weight:700;color:#5aa83a">57</span>
<span class="t" style="left:39.40px;top:362.89px;font-family:'Liberation Mono',monospace;font-size:10px;line-height:12.5px;font-weight:400;color:#1a1a1a;letter-spacing:-0.047px">        }</span>
<span class="t" style="left:15.39px;top:362.65px;font-family:'Liberation Mono',monospace;font-size:10.5px;line-height:13.12px;font-weight:400;color:#939393">58</span>
<span class="t" style="left:39.40px;top:373.93px;font-family:'Liberation Mono',monospace;font-size:10px;line-height:12.5px;font-weight:400;color:#1a1a1a;letter-spacing:-0.047px">    });</span>
<span class="t" style="left:15.39px;top:373.69px;font-family:'Liberation Mono',monospace;font-size:10.5px;line-height:13.12px;font-weight:700;color:#5aa83a">59</span>
<span class="t" style="left:39.40px;top:384.97px;font-family:'Liberation Mono',monospace;font-size:10px;line-height:12.5px;font-weight:400;color:#1a1a1a;letter-spacing:-0.047px">}</span>
<span class="t" style="left:15.39px;top:384.73px;font-family:'Liberation Mono',monospace;font-size:10.5px;line-height:13.12px;font-weight:700;color:#5aa83a">60</span>
</div>
</body></html>
